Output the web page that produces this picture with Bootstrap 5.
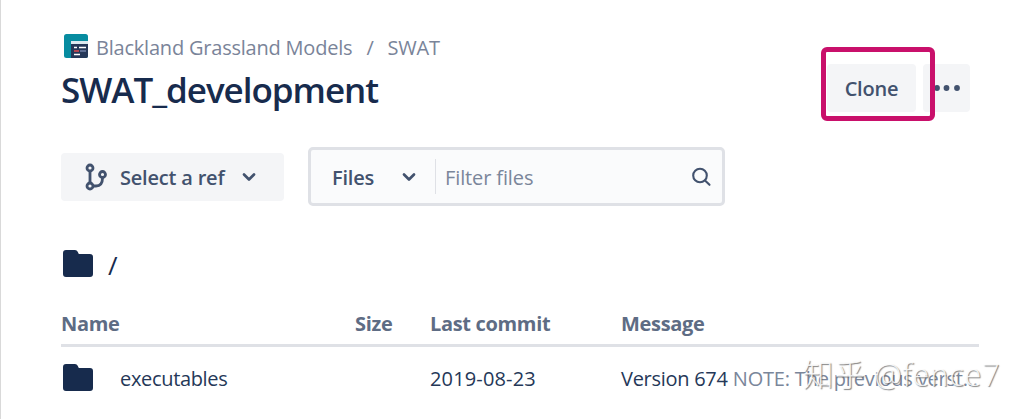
<!DOCTYPE html>
<html lang="en">
<head>
<meta charset="utf-8">
<meta name="viewport" content="width=device-width, initial-scale=1">
<title>SWAT_development</title>
<link href="https://cdn.jsdelivr.net/npm/bootstrap@5.3.0/dist/css/bootstrap.min.css" rel="stylesheet">
<style>
body{font-family:"Open Sans","Noto Sans CJK SC",sans-serif;font-size:20px;line-height:28px;color:#42526e;background:#fff;height:419px;overflow:hidden;border-left:1px solid #d9d9d9;white-space:nowrap}
.page{padding:33px 49px 0 60px}
svg{flex:none;display:block}
.crumbs{color:#7a8499;height:28px}
.crumbs span{letter-spacing:-.21px;padding-top:1px}
.crumbs svg{position:relative;top:-1px}
.repo-title{font-size:35px;line-height:44px;font-weight:600;color:#172b4d;letter-spacing:-1.02px;margin:7px 0 0}
.tool{background:#f4f5f7;border:0;border-radius:4px;height:48px;padding:2px 0 0;color:#42526e;font-size:20px;font-weight:600;letter-spacing:-.2px}
.tool:hover{background:#ebecf0}
.tool svg{position:relative;top:-1px}
.clone{width:89px}
.more{width:47px}
.actions{margin-top:31px;gap:7px}
.highlight{left:-6px;top:-17px;width:114px;height:74px;border:5px solid #c9106b;border-radius:6px}
.filters{margin-top:35px;gap:24px}
.ref{width:223px;padding-left:24px}
.search{width:417px;height:59px;border:3px solid #dfe1e6;border-radius:5px;background:#fafbfc;padding:0 11px 0 21px}
.files{font-weight:600;letter-spacing:-.2px;width:77px;padding-top:3px}
.rule{width:1px;height:35px;background:#dfe1e6;margin:0 9px 0 19px}
.ph{color:#7a869a;letter-spacing:-.12px;padding-top:3px}
.root{margin-top:41px;padding-left:2px;height:32px;color:#172b4d}
.root span{font-size:26px;margin-left:15px;padding-top:3px}
.files-table{margin-top:31px;width:918px;table-layout:fixed}
.files-table>thead{border-bottom:3px solid #dfe1e6}
.files-table th{font-weight:700;color:#5e6c84;padding:0 0 6px;border:0;letter-spacing:-.33px}
.files-table td{padding:18px 0 0;border:0;color:#253858;height:48px}
.nm{letter-spacing:-.33px}
.dt{letter-spacing:.15px}
.files-table .note{color:#7a869a;letter-spacing:-.2px}
.ver{letter-spacing:-.28px}
.wm{left:803px;top:352px;font-size:30.5px;line-height:44px;color:rgba(255,255,255,.85);text-shadow:1px 1px 1px rgba(90,90,90,.75);font-weight:300;letter-spacing:.9px}
</style>
</head>
<body>
<main class="page position-relative">
  <header class="d-flex justify-content-between">
    <div>
      <div class="crumbs d-flex align-items-center">
        <svg width="26" height="26" viewBox="0 0 26 26" style="margin-left:2px"><rect x="1" y="1" width="24" height="24" rx="2.500" fill="#078ca0"/><path d="M8 9h17v14a2 2 0 0 1-2 2H8z" fill="#253858"/><path d="M8 8h17v3H8z" fill="#dceaf0"/><path d="M11 14.500h3m2 0h7M11 21.500h6" stroke="#fff" stroke-width="1.400"/><path d="M11 18h5" stroke="#f04b50" stroke-width="1.400"/><path d="M17 18h6" stroke="#7d8fb5" stroke-width="1.300"/></svg>
        <span style="margin-left:7px">Blackland Grassland Models</span><span style="margin:0 14px">/</span><span>SWAT</span>
      </div>
      <h1 class="repo-title">SWAT_development</h1>
    </div>
    <div class="actions d-flex position-relative" style="margin-right:9px">
      <button class="btn tool clone">Clone</button>
      <button class="btn tool more d-flex align-items-center justify-content-center" aria-label="More"><svg width="26" height="6" viewBox="0 0 26 6" fill="#42526e"><circle cx="3" cy="3" r="2.900"/><circle cx="12.500" cy="3" r="2.900"/><circle cx="23" cy="3" r="2.900"/></svg></button>
      <div class="highlight position-absolute"></div>
    </div>
  </header>
  <div class="filters d-flex align-items-center">
    <button class="btn tool ref d-flex align-items-center">
      <svg width="22" height="28" viewBox="0 0 22 28" fill="none" stroke="#42526e" stroke-width="2.800"><circle cx="5" cy="5" r="3"/><circle cx="5" cy="23" r="3"/><circle cx="17.500" cy="11.500" r="3"/><path d="M5 8.500v11M8.500 23H11q6.500 0 6.500-8"/></svg>
      <span class="text-start" style="margin-left:13px;width:111px">Select a ref</span>
      <svg style="margin-left:11px" width="14" height="10" viewBox="0 0 14 10" fill="none" stroke="#42526e" stroke-width="2.700" stroke-linecap="round" stroke-linejoin="round"><path d="M2 2.500l5 5 5-5"/></svg>
    </button>
    <div class="search d-flex align-items-center">
      <span class="files">Files</span>
      <svg style="margin-left:-7px" width="14" height="10" viewBox="0 0 14 10" fill="none" stroke="#42526e" stroke-width="2.700" stroke-linecap="round" stroke-linejoin="round"><path d="M2 2.500l5 5 5-5"/></svg>
      <span class="rule"></span><span class="ph">Filter files</span>
      <svg class="ms-auto" width="20" height="20" viewBox="0 0 20 20" fill="none" stroke="#42526e" stroke-width="2.100" stroke-linecap="round"><circle cx="9" cy="8.500" r="6.800"/><path d="M14 13.500l4.500 4.300"/></svg>
    </div>
  </div>
  <div class="root d-flex align-items-center">
    <svg width="30" height="27" viewBox="0 0 30 27" fill="#172b4d"><path d="M0 3a3 3 0 0 1 3-3h9a3 3 0 0 1 2.700 1.800L15.800 4H27a3 3 0 0 1 3 3v17a3 3 0 0 1-3 3H3a3 3 0 0 1-3-3z"/></svg><span>/</span>
  </div>
  <table class="table files-table mb-0">
    <colgroup><col style="width:294px"><col style="width:75px"><col style="width:191px"><col></colgroup>
    <thead><tr><th>Name</th><th>Size</th><th>Last commit</th><th>Message</th></tr></thead>
    <tbody><tr><td><div class="d-flex align-items-center"><svg style="margin:-4px 27px 0 2px" width="30" height="27" viewBox="0 0 30 27" fill="#172b4d"><path d="M0 3a3 3 0 0 1 3-3h9a3 3 0 0 1 2.700 1.800L15.800 4H27a3 3 0 0 1 3 3v17a3 3 0 0 1-3 3H3a3 3 0 0 1-3-3z"/></svg><span class="nm">executables</span></div></td><td></td><td><span class="dt">2019-08-23</span></td><td><span class="ver">Version 674</span> <span class="note">NOTE: The previous verst...</span></td></tr></tbody>
  </table>
</main>
<div class="wm position-absolute">知乎 @fence7</div>
<script src="https://cdn.jsdelivr.net/npm/bootstrap@5.3.0/dist/js/bootstrap.bundle.min.js"></script>
</body>
</html>
